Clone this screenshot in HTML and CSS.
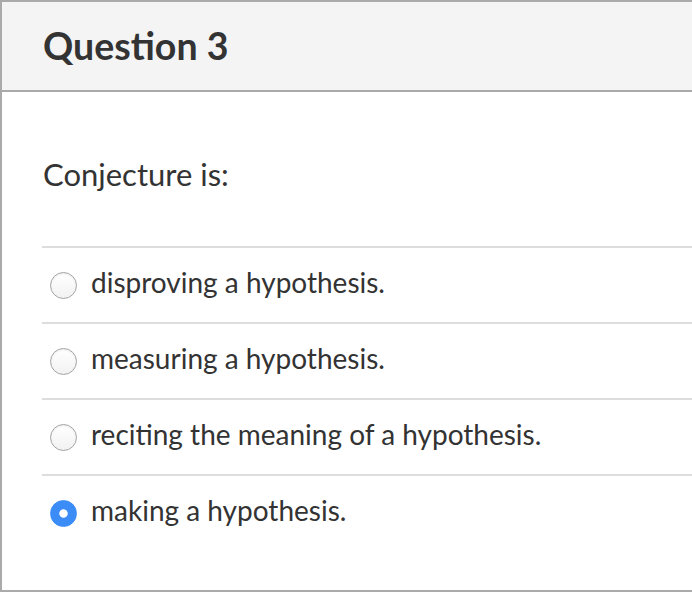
FILE: index.html
```html
<!DOCTYPE html>
<html>
<head>
<meta charset="utf-8">
<link rel="stylesheet" href="styles.css">
</head>
<body>
<div class="question">
  <div class="header"><h2 class="title">Question 3</h2></div>
  <div class="content">
    <p class="prompt">Conjecture is:</p>
    <ul class="answers">
      <li class="answer"><span class="radio"></span><span class="label">disproving a hypothesis.</span></li>
      <li class="answer"><span class="radio"></span><span class="label">measuring a hypothesis.</span></li>
      <li class="answer"><span class="radio"></span><span class="label">reciting the meaning of a hypothesis.</span></li>
      <li class="answer"><span class="radio checked"></span><span class="label">making a hypothesis.</span></li>
    </ul>
  </div>
</div>
</body>
</html>
```
FILE: styles.css
```css
html, body {
  margin: 0;
  padding: 0;
  background: #fff;
  overflow: hidden;
}
body {
  font-family: Lato, "Open Sans", sans-serif;
  color: #333333;
}
.question {
  width: 100%;
  box-sizing: border-box;
  border: 2px solid #aaaaaa;
  border-right: none;
  height: 592px;
}
.header {
  height: 88px;
  background: #f4f4f4;
  border-bottom: 2px solid #aaaaaa;
  display: flex;
  align-items: center;
  padding-left: 41px;
}
.title {
  margin: 0;
  font-size: 37.5px;
  font-weight: 700;
  color: #333333;
  line-height: 44px;
}
.content {
  padding-left: 40px;
}
.prompt {
  margin: 0;
  padding-top: 64px;
  padding-left: 1px;
  font-size: 31px;
  line-height: 36px;
  color: #333333;
}
.answers {
  list-style: none;
  margin: 54px 0 0 0;
  padding: 0;
}
.answer {
  border-top: 2px solid #dddddd;
  height: 74px;
  display: flex;
  align-items: center;
  padding-left: 8px;
}
.radio {
  width: 25px;
  height: 25px;
  border-radius: 50%;
  border: 1px solid #a4a4a4;
  background: linear-gradient(#ffffff, #f2f2f2);
  box-shadow: inset 0 1px 2px rgba(0,0,0,0.08);
  flex: none;
  margin-right: 14px;
}
.radio.checked {
  border-color: #3b8cf6;
  background: radial-gradient(circle, #ffffff 0 3.8px, #3b8cf6 4.6px);
  box-shadow: none;
}
.label {
  font-size: 28px;
  line-height: 34px;
  padding-bottom: 6px;
  color: #333333;
}
```
